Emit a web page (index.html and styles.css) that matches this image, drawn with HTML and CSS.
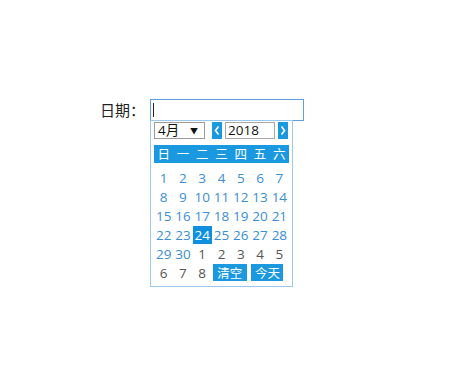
FILE: index.html
```html
<!DOCTYPE html>
<html lang="zh-CN">
<head>
<meta charset="utf-8">
<title>日期</title>
<link rel="stylesheet" href="styles.css">
</head>
<body>
<div class="page">
  <div class="row">
    <span class="label">日期：</span>
    <div class="picker">
      <div class="field"><span class="caret"></span></div>
      <div class="cal">
        <div class="toolbar">
          <div class="month-sel"><span>4月</span><span class="tri">▼</span></div>
          <span class="nav nav-prev">
            <svg width="10" height="17" viewBox="0 0 10 17"><path d="M6.5 4.5 L3.5 8.5 L6.5 12.5" fill="none" stroke="#fff" stroke-width="1.6"/></svg>
          </span>
          <div class="year">2018</div>
          <span class="nav nav-next">
            <svg width="10" height="17" viewBox="0 0 10 17"><path d="M3.5 4.5 L6.5 8.5 L3.5 12.5" fill="none" stroke="#fff" stroke-width="1.6"/></svg>
          </span>
        </div>
        <div class="week">
          <span>日</span><span>一</span><span>二</span><span>三</span><span>四</span><span>五</span><span>六</span>
        </div>
        <div class="days">
          <span>1</span><span>2</span><span>3</span><span>4</span><span>5</span><span>6</span><span>7</span>
          <span>8</span><span>9</span><span>10</span><span>11</span><span>12</span><span>13</span><span>14</span>
          <span>15</span><span>16</span><span>17</span><span>18</span><span>19</span><span>20</span><span>21</span>
          <span>22</span><span>23</span><span class="today">24</span><span>25</span><span>26</span><span>27</span><span>28</span>
          <span>29</span><span>30</span><span class="other">1</span><span class="other">2</span><span class="other">3</span><span class="other">4</span><span class="other">5</span>
          <span class="other">6</span><span class="other">7</span><span class="other">8</span>
          <span class="act act-clear">清空</span>
          <span class="act act-today">今天</span>
        </div>
      </div>
    </div>
  </div>
</div>
</body>
</html>
```
FILE: styles.css
```css
html, body {
  margin: 0;
  padding: 0;
  background: #fff;
}
body {
  font-family: "Open Sans", "Noto Sans CJK SC", sans-serif;
  color: #222;
}
.page {
  padding: 99px 0 0 100px;
}
.row {
  display: flex;
  align-items: flex-start;
}
.label {
  font-family: "Noto Sans CJK SC", sans-serif;
  font-size: 15px;
  line-height: 22px;
  width: 50px;
  color: #222;
}
.picker {
  display: flex;
  flex-direction: column;
  align-items: flex-start;
}
.field {
  box-sizing: border-box;
  width: 154px;
  height: 22px;
  border: 1px solid #5f9fe0;
  padding: 3px 2px;
}
.caret {
  display: block;
  width: 1px;
  height: 14px;
  background: #222;
}
.cal {
  margin: -1px 0 0 0;
  box-sizing: border-box;
  width: 143px;
  height: 167px;
  border: 1px solid #9cc8ee;
  background: #fff;
  padding: 1px 2px 0 3px;
}
.toolbar {
  display: flex;
  align-items: center;
  height: 17px;
  font-size: 13.5px;
  color: #111;
}
.month-sel {
  box-sizing: border-box;
  width: 51px;
  height: 17px;
  border: 1px solid #9a9a9a;
  display: flex;
  justify-content: space-between;
  align-items: center;
  padding: 0 6px 0 3px;
  line-height: 15px;
}
.tri {
  font-size: 8px;
  color: #111;
}
.nav {
  display: block;
  width: 10px;
  height: 17px;
  background: #1a98e0;
}
.nav svg {
  display: block;
}
.nav-prev {
  margin-left: 7px;
}
.year {
  box-sizing: border-box;
  width: 50px;
  height: 17px;
  border: 1px solid #a8a8a8;
  margin: 0 3px;
  padding-left: 2px;
  line-height: 15px;
}
.week {
  font-family: "Noto Sans CJK SC", sans-serif;
  margin-top: 6px;
  width: 135px;
  height: 18px;
  background: #1a98e0;
  color: #fff;
  display: grid;
  grid-template-columns: repeat(7, 1fr);
  font-size: 12.5px;
  line-height: 18px;
  text-align: center;
}
.days {
  margin-top: 6px;
  width: 135px;
  display: grid;
  grid-template-columns: repeat(7, 1fr);
  grid-auto-rows: 19px;
  font-size: 13.5px;
  line-height: 19px;
  text-align: center;
  color: #3a8ed6;
}
.days .today {
  background: #0f90df;
  color: #fff;
  margin: 0 0 1px 0;
}
.days .other {
  color: #555;
}
.act {
  font-family: "Noto Sans CJK SC", sans-serif;
  grid-column: span 2;
  margin: 0 0 2px 1px;
  height: 17px;
  background: #1a98e0;
  color: #fff;
  font-size: 12.5px;
  line-height: 17px;
  text-align: center;
}
.act-clear {
  width: 34px;
}
.act-today {
  width: 32px;
}
```
